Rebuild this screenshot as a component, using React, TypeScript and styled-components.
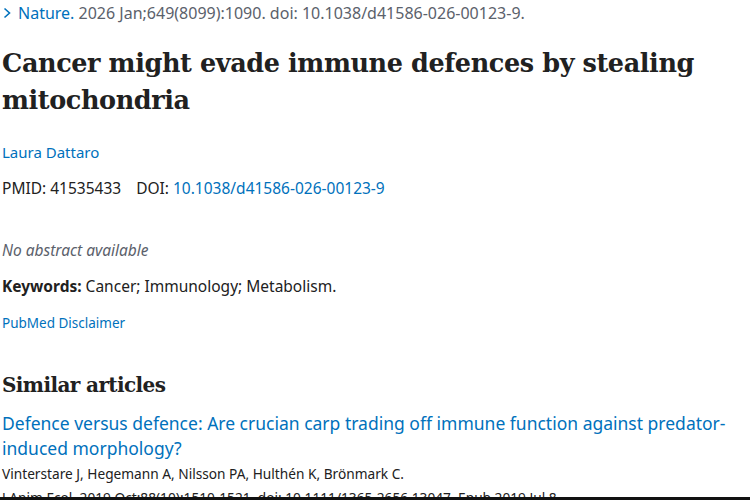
import React from 'react';
import styled, {createGlobalStyle} from 'styled-components';

const GlobalStyle = createGlobalStyle`
  html, body {
    margin: 0;
    padding: 0;
    background: #fff;
    overflow: hidden;
  }
  body {
    font-family: 'Noto Sans', 'Open Sans', sans-serif;
    color: #212121;
  }
`;

const Page = styled.div`
  width: 750px;
  height: 500px;
  overflow: hidden;
  box-sizing: border-box;
  border-bottom: 3px solid #111;
`;

const Content = styled.div`
  padding: 0 0 0 2px;
`;

const Citation = styled.div`
  display: flex;
  align-items: center;
  gap: 6px;
  margin-top: 3px;
  font-size: 16px;
  line-height: 20px;
  color: #5b616b;
`;

const Chevron = styled.svg`
  width: 10px;
  height: 12px;
  flex: none;
`;

const Link = styled.a`
  color: #0071bc;
  text-decoration: none;
`;

const Title = styled.h1`
  margin: 22px 0 0;
  font-family: 'DejaVu Serif', 'Liberation Serif', serif;
  font-weight: 700;
  font-size: 25.5px;
  letter-spacing: -0.4px;
  line-height: 37px;
  color: #212121;
`;

const Line = styled.div<{$top: number; $size?: number}>`
  margin-top: ${p => p.$top}px;
  font-size: ${p => p.$size ?? 15}px;
  line-height: 20px;
  color: #212121;
`;

const Gap = styled.span`
  display: inline-block;
  width: 15px;
`;

const Muted = styled.div`
  margin-top: 42px;
  font-size: 15.5px;
  line-height: 20px;
  font-style: italic;
  color: #5b616b;
`;

const Label = styled.strong`
  font-weight: 700;
`;

const SectionTitle = styled.h2`
  margin: 37px 0 0;
  font-family: 'DejaVu Serif', 'Liberation Serif', serif;
  font-weight: 700;
  font-size: 20px;
  letter-spacing: -0.6px;
  line-height: 30px;
  color: #212121;
`;

const ArticleTitle = styled.div`
  margin-top: 11px;
  font-size: 17.5px;
  line-height: 25px;
  color: #0071bc;
`;

const ArticleMeta = styled.div`
  margin-top: 1px;
  font-size: 13.7px;
  line-height: 23px;
  color: #212121;
`;

export default function App() {
  return (
    <>
      <GlobalStyle />
      <Page>
        <Content>
          <Citation>
            <Chevron viewBox="0 0 10 12">
              <path d="M2.5 1.5 L7.5 6 L2.5 10.5" fill="none" stroke="#0071bc" strokeWidth="1.6" />
            </Chevron>
            <span>
              <Link href="#">Nature.</Link> 2026 Jan;649(8099):1090. doi: 10.1038/d41586-026-00123-9.
            </span>
          </Citation>

          <Title>Cancer might evade immune defences by stealing mitochondria</Title>

          <Line $top={23}>
            <Link href="#">Laura Dattaro</Link>
          </Line>
          <Line $top={16} $size={15.5}>
            PMID: 41535433<Gap />DOI: <Link href="#">10.1038/d41586-026-00123-9</Link>
          </Line>

          <Muted>No abstract available</Muted>

          <Line $top={16} $size={15.5}>
            <Label>Keywords:</Label> Cancer; Immunology; Metabolism.
          </Line>
          <Line $top={17} $size={13.5}>
            <Link href="#">PubMed Disclaimer</Link>
          </Line>

          <SectionTitle>Similar articles</SectionTitle>
          <ArticleTitle>
            Defence versus defence: Are crucian carp trading off immune function against predator-induced morphology?
          </ArticleTitle>
          <ArticleMeta>Vinterstare J, Hegemann A, Nilsson PA, Hulthén K, Brönmark C.</ArticleMeta>
          <ArticleMeta>J Anim Ecol. 2019 Oct;88(10):1510-1521. doi: 10.1111/1365-2656.13047. Epub 2019 Jul 8.</ArticleMeta>
        </Content>
      </Page>
    </>
  );
}
